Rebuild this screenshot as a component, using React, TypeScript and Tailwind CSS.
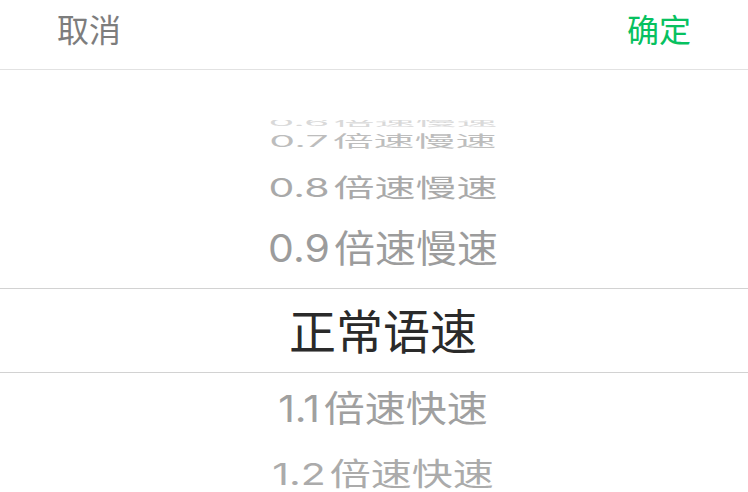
import React from "react";

type Row = {
  num: string;
  text: string;
  height: string;
  scale: string;
  color: string;
};

// rows above the selection band, top to bottom
const above: Row[] = [
  { num: "0.6", text: "倍速慢速", height: "h-[20px]", scale: "scale-y-[0.22]", color: "text-[#d9d9d9]" },
  { num: "0.7", text: "倍速慢速", height: "h-[18px]", scale: "scale-y-[0.38]", color: "text-[#bdbdbd]" },
  { num: "0.8", text: "倍速慢速", height: "h-[74px]", scale: "scale-y-[0.62]", color: "text-[#a9a9a9]" },
  { num: "0.9", text: "倍速慢速", height: "h-[46px]", scale: "scale-y-[0.92]", color: "text-[#9c9c9c]" },
];

// rows below the selection band
const below: Row[] = [
  { num: "1.1", text: "倍速快速", height: "h-[70px]", scale: "scale-y-[0.9]", color: "text-[#a0a0a0]" },
  { num: "1.2", text: "倍速快速", height: "h-[60px]", scale: "scale-y-[0.74]", color: "text-[#ababab]" },
];

function WheelRow({ row }: { row: Row }) {
  return (
    <div className={`${row.height} flex items-center justify-center`}>
      <span className={`flex items-baseline text-[41px] leading-none whitespace-nowrap ${row.scale} ${row.color}`}>
        <span style={{ fontFamily: 'Inter, "Noto Sans", sans-serif' }}>{row.num}</span>
        <span className="ml-[4px]">{row.text}</span>
      </span>
    </div>
  );
}

export default function App() {
  return (
    <div
      className="w-[748px] h-[492px] bg-white overflow-hidden flex flex-col"
      style={{ fontFamily: '"Noto Sans CJK SC", "Noto Sans", sans-serif' }}
    >
      {/* Toolbar */}
      <div className="h-[70px] shrink-0 flex items-center justify-between px-[57px] pb-[14px] border-b border-[#e2e2e2]">
        <button className="text-[32px] leading-none text-[#7d7d7d]">取消</button>
        <button className="text-[32px] leading-none text-[#07c160]">确定</button>
      </div>

      <div className="h-[50px] shrink-0" />

      {/* Wheel */}
      <div className="flex-1 overflow-hidden pl-[18px]">
        <div className="-mt-[8px] flex flex-col">
          {above.map((row) => (
            <WheelRow key={row.num} row={row} />
          ))}
          <div className="h-[18px]" />
          <div className="h-[85px] flex items-center justify-center border-y border-[#d2d2d2] -ml-[18px] pl-[18px] pb-[4px]">
            <span className="text-[47px] leading-none text-[#2a2a2a]">正常语速</span>
          </div>
          {below.map((row) => (
            <WheelRow key={row.num} row={row} />
          ))}
        </div>
      </div>
    </div>
  );
}
